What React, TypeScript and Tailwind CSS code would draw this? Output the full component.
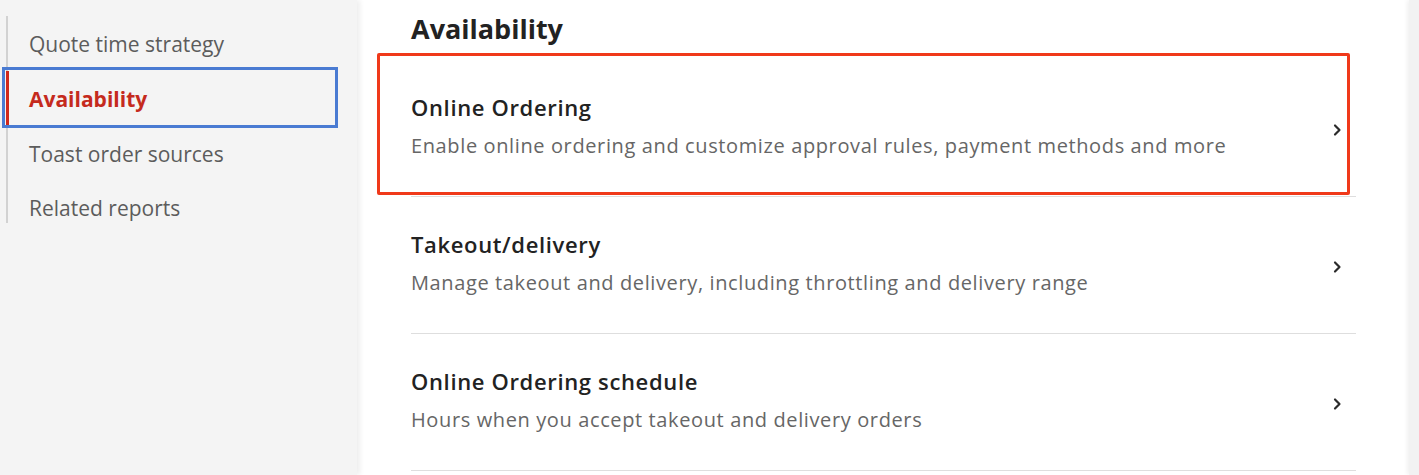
import React from 'react';

const navItems = ['Quote time strategy', 'Availability', 'Toast order sources', 'Related reports'];

const rows = [
  {
    title: 'Online Ordering',
    desc: 'Enable online ordering and customize approval rules, payment methods and more',
    highlighted: true,
  },
  {
    title: 'Takeout/delivery',
    desc: 'Manage takeout and delivery, including throttling and delivery range',
  },
  {
    title: 'Online Ordering schedule',
    desc: 'Hours when you accept takeout and delivery orders',
  },
];

const Chevron = () => (
  <svg width="10" height="14" viewBox="0 0 10 14" fill="none" className="mt-[4px]">
    <path d="M3 2.5 L7.5 7 L3 11.5" stroke="#2b2b2b" strokeWidth="2.2" strokeLinecap="round" strokeLinejoin="round" />
  </svg>
);

const App = () => {
  const active = 'Availability';

  return (
    <div className="flex h-[475px] w-full overflow-hidden bg-white font-['Open_Sans',sans-serif]">
      {/* side nav */}
      <div className="relative z-10 w-[357px] shrink-0 bg-[#f4f4f4] shadow-[3px_0_5px_rgba(0,0,0,0.07)]">
        <nav className="ml-[6px] mt-[16px] border-l-2 border-[#d2d2d2]">
          {navItems.map((item, i) => (
            <div
              key={item}
              className={
                i === navItems.length - 1
                  ? 'relative flex h-[42px] items-start pl-[21px] pt-[13px]'
                  : 'relative flex h-[55px] items-center pl-[21px]'
              }
            >
              {item === active && (
                <>
                  <div className="absolute -left-[2px] top-0 bottom-0 w-[3px] bg-[#d0291c]" />
                  <div className="absolute -left-[6px] top-[-4px] h-[61px] w-[336px] border-[3px] border-[#4a7bd2]" />
                </>
              )}
              <span
                className={
                  item === active
                    ? 'text-[21px] font-bold leading-[28px] text-[#c52a1d]'
                    : 'text-[21px] leading-[28px] text-[#5c5c5c]'
                }
              >
                {item}
              </span>
            </div>
          ))}
        </nav>
      </div>

      {/* main */}
      <div className="flex-1 px-[54px] pr-[53px]">
        <h1 className="flex h-[60px] items-center pb-[2px] text-[27px] font-bold text-[#222]">Availability</h1>
        <div>
          {rows.map((r) => (
            <div key={r.title} className="relative flex h-[137px] items-center border-b border-[#dedede] pr-[14px]">
              {r.highlighted && (
                <div className="absolute -left-[34px] -top-[7px] h-[142px] w-[973px] rounded-[2px] border-[3px] border-[#f0391a]" />
              )}
              <div className="flex-1 pb-[3px]">
                <div className="text-[22px] font-semibold leading-[26px] tracking-[0.65px] text-[#222]">{r.title}</div>
                <div className="mt-[13px] text-[20px] leading-[26px] tracking-[0.62px] text-[#666]">{r.desc}</div>
              </div>
              <Chevron />
            </div>
          ))}
        </div>
      </div>

      <div className="w-[10px] shrink-0 bg-[#f2f2f2] shadow-[-2px_0_4px_rgba(0,0,0,0.06)]" />
    </div>
  );
};

export default App;
